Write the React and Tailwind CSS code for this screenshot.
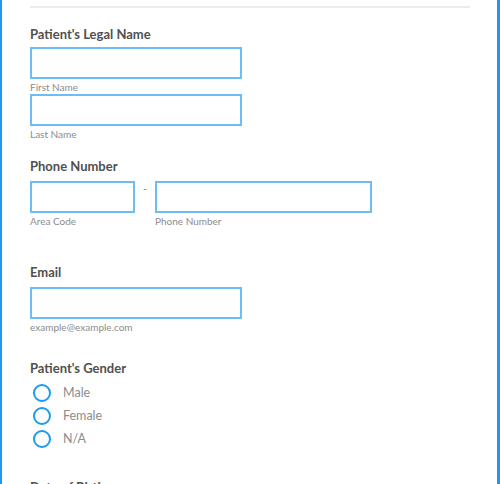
const FONT = { fontFamily: "Lato, 'Open Sans', sans-serif" };

function Field({ width, label }) {
  return (
    <div>
      <div className={`h-[32px] border-2 border-[#6ebcf5] bg-white ${width}`} />
      <div className="mt-[2px] text-[10px] leading-[12px] text-[#8c8c8c]">{label}</div>
    </div>
  );
}

function Heading({ children, className = "" }) {
  return (
    <h2 className={`text-[13px] leading-[16px] font-bold text-[#505050] ${className}`}>
      {children}
    </h2>
  );
}

export default function App() {
  return (
    <div
      className="min-h-[484px] h-[484px] overflow-hidden bg-white border-l-[2px] border-r-[3px] border-[#1a9bf0]"
      style={FONT}
    >
      <div className="pl-[28px] pr-[27px] pt-[6px]">
        <div className="h-[2px] w-[440px] bg-[#ececec]" />

        <Heading className="mt-[18px]">Patient's Legal Name</Heading>
        <div className="mt-[5px] flex flex-col gap-[1px]">
          <Field width="w-[212px]" label="First Name" />
          <Field width="w-[212px]" label="Last Name" />
        </div>

        <Heading className="mt-[18px]">Phone Number</Heading>
        <div className="mt-[7px] flex items-start">
          <Field width="w-[105px]" label="Area Code" />
          <span className="w-[20px] text-center text-[11px] leading-[16px] text-[#8c8c8c]">-</span>
          <Field width="w-[217px]" label="Phone Number" />
        </div>

        <Heading className="mt-[37px]">Email</Heading>
        <div className="mt-[7px]">
          <Field width="w-[212px]" label="example@example.com" />
        </div>

        <Heading className="mt-[27px]">Patient's Gender</Heading>
        <div className="mt-[8px] flex flex-col gap-[5px] pl-[3px]">
          {["Male", "Female", "N/A"].map((o) => (
            <label key={o} className="flex items-center gap-[12px] h-[18px]">
              <span className="w-[18px] h-[18px] rounded-full border-2 border-[#1a9bf0]" />
              <span className="text-[12.5px] text-[#8c8c8c]">{o}</span>
            </label>
          ))}
        </div>

        <Heading className="mt-[31px]">Date of Birth</Heading>
      </div>
    </div>
  );
}
